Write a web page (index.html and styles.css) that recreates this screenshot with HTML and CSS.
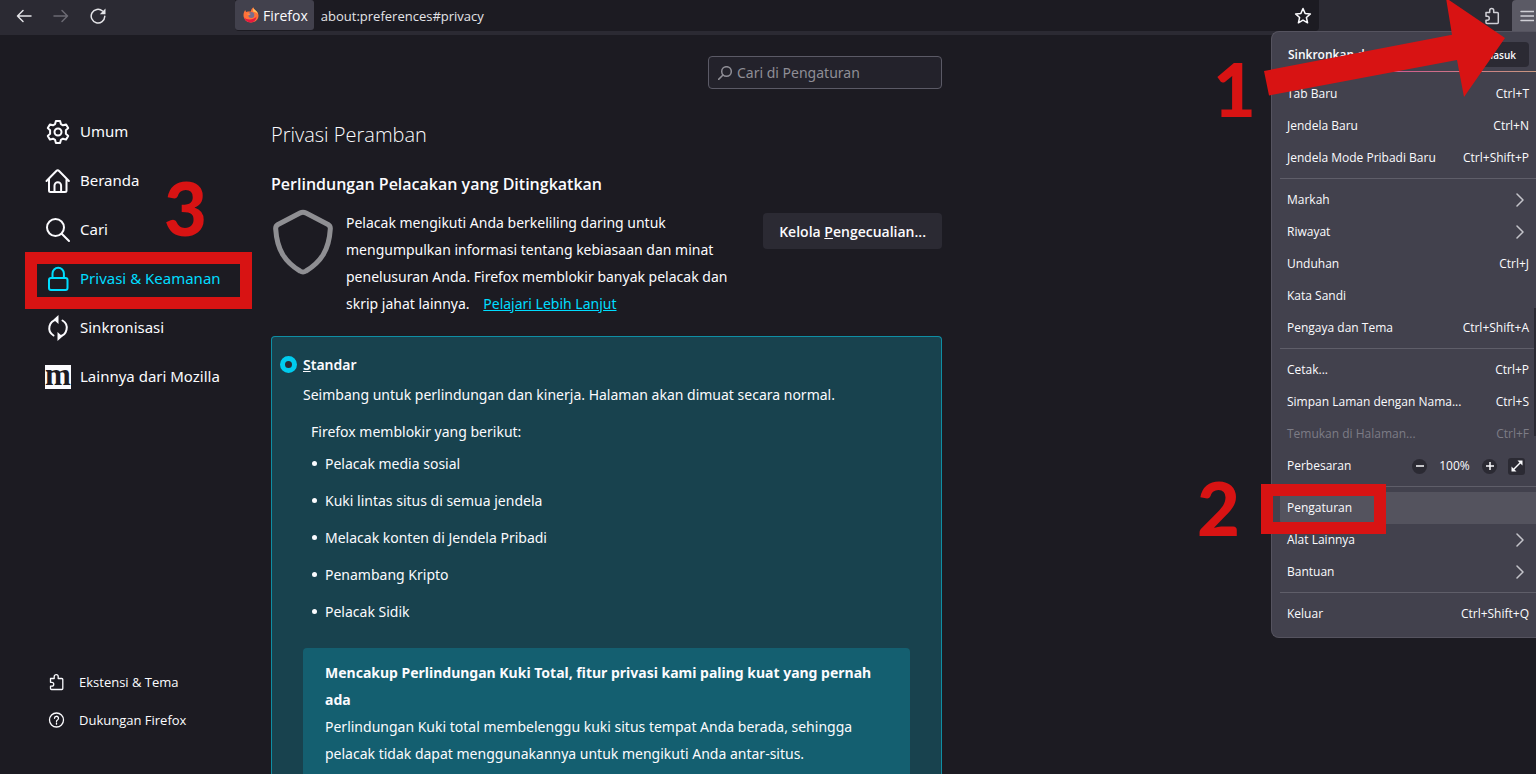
FILE: index.html
```html
<!DOCTYPE html>
<html lang="id">
<head>
<meta charset="utf-8">
<title>Pengaturan</title>
<link rel="stylesheet" href="styles.css">
</head>
<body>
<header class="toolbar">
  <div class="nav-buttons">
    <button class="icon-button" aria-label="Kembali"><svg width="16" height="16" viewBox="0 0 16 16"><path d="M15 8H1.500M7 2.500 1.500 8 7 13.500"/></svg></button>
    <button class="icon-button dim" aria-label="Maju" disabled><svg width="16" height="16" viewBox="0 0 16 16"><path d="M1 8h13.500M9 2.500 14.500 8 9 13.500"/></svg></button>
    <button class="icon-button" aria-label="Muat ulang"><svg width="16" height="16" viewBox="0 0 16 16"><path d="M14.800 8.300A6.800 6.800 0 1 1 12.500 3"/><path class="solid" d="M15.500 0.500v5.800H9.800z"/></svg></button>
  </div>
  <div class="urlbar">
    <button class="identity">
      <svg class="plain" width="16" height="16" viewBox="0 0 16 16"><path d="M8 15.500C3.600 15.500.5 12.400.5 8.300c0-2 .6-3.800 1.700-5.300l.9 1.900 1.700-.3L8 4.500c0-1.700.8-3.200 2.300-4.300.2 1.500 1 2 2 3 2 1.500 3.200 3.300 3.200 5.500 0 3.900-3.300 6.800-7.500 6.800z" fill="#ff7139"/><path d="M10.300.2c.2 1.500 1 2 2 3 1.400 1 2.300 2.300 2.800 3.700-1.500-1.300-3-1.900-5-2.400z" fill="#ffc45c"/><path d="M1 10.200c1.500 1.600 3.500 2.300 6 2.200 2.700 0 4.800-1 6.500-3-.5 3.800-2.800 5.900-5.700 6.100C4.500 15.400 1.800 13.300 1 10.200z" fill="#e5193f"/><circle cx="8.300" cy="8" r="3" fill="#7a6c8c"/><path d="M3.500 6.800c1.500-.8 3-.8 4.200.3L5.800 8.500z" fill="#ff8c45"/></svg>
      <span>Firefox</span>
    </button>
    <input class="url" type="text" aria-label="Alamat" value="about:preferences#privacy">
    <button class="icon-button" aria-label="Markahi"><svg width="18" height="18" viewBox="0 0 18 18"><path d="m9 1.500 2.100 4.900 5.300.5-4 3.600 1.200 5.300L9 13.100l-4.600 2.700 1.200-5.300-4-3.600 5.300-.5z"/></svg></button>
  </div>
  <div class="tools">
    <button class="icon-button" aria-label="Ekstensi"><svg width="16" height="18" viewBox="0 0 16 18"><path d="M2 5.500h3.700V3.600a2 2 0 0 1 4 0v1.900h3.600a1 1 0 0 1 1 1v9a1 1 0 0 1-1 1H3a1 1 0 0 1-1-1v-2.300h1.300a1.900 1.900 0 0 0 0-3.900H2z"/></svg></button>
    <button class="icon-button menu-button" aria-label="Menu"><svg width="14" height="14" viewBox="0 0 14 14"><path d="M1 2.500h13M1 7h13M1 11.500h13"/></svg></button>
  </div>
</header>

<div class="page">
  <nav class="sidebar">
    <ul class="categories">
      <li><a href="#umum"><svg width="26" height="26" viewBox="0 0 26 26"><path d="M10.900 2h4.200l.8 3.100 2.100 1.200 3.100-.9 2.100 3.700-2.300 2.200v3.400l2.300 2.200-2.100 3.700-3.100-.9-2.100 1.200-.8 3.100h-4.200l-.8-3.100L8 19.700l-3.100.9-2.100-3.700 2.300-2.200v-3.400L2.800 9.100l2.100-3.700 3.100.9 2.100-1.200z"/><circle cx="13" cy="13" r="3.500"/></svg><span>Umum</span></a></li>
      <li><a href="#beranda"><svg width="26" height="26" viewBox="0 0 26 26"><path d="M1.500 13 11.300 3a2 2 0 0 1 2.800 0l9.800 10M4 11v11.500a1.500 1.500 0 0 0 1.500 1.500h14.500a1.500 1.500 0 0 0 1.500-1.500V11M9.500 24v-6.500a3.300 3.300 0 0 1 6.600 0V24"/></svg><span>Beranda</span></a></li>
      <li><a href="#cari"><svg width="26" height="26" viewBox="0 0 26 26"><circle cx="10.500" cy="10.500" r="8.500"/><path d="m16.700 16.700 7.300 7.300"/></svg><span>Cari</span></a></li>
      <li class="current"><a href="#privasi" aria-current="page"><svg width="26" height="26" viewBox="0 0 26 26"><rect x="4" y="12" width="18.500" height="12" rx="2"/><path d="M7.500 12V7.500a5.700 5.700 0 0 1 11.400 0V12"/></svg><span>Privasi &amp; Keamanan</span></a><span class="frame"></span></li>
      <li><a href="#sinkronisasi"><svg width="26" height="26" viewBox="0 0 26 26"><path d="M8.500 20.500A8.500 8.500 0 0 1 12 4.700M17.500 5.500A8.500 8.500 0 0 1 14 21.300"/><path class="solid" d="M13.500 0v9l-5-4.500zM12.500 17v9l5-4.500z"/></svg><span>Sinkronisasi</span></a></li>
      <li><a href="#lainnya"><span class="mozilla">m</span><span>Lainnya dari Mozilla</span></a></li>
    </ul>
    <span class="step step-three">3</span>
    <ul class="support">
      <li><a href="#ekstensi"><svg width="16" height="18" viewBox="0 0 16 18"><path d="M2 5.500h3.700V3.600a2 2 0 0 1 4 0v1.900h3.600a1 1 0 0 1 1 1v9a1 1 0 0 1-1 1H3a1 1 0 0 1-1-1v-2.300h1.300a1.900 1.900 0 0 0 0-3.900H2z"/></svg><span>Ekstensi &amp; Tema</span></a></li>
      <li><a href="#dukungan"><svg width="16" height="16" viewBox="0 0 16 16"><circle cx="8" cy="8" r="7"/><path d="M6 6.300a2 2 0 1 1 3 1.700c-.7.400-1 .7-1 1.400M8 11v1.200"/></svg><span>Dukungan Firefox</span></a></li>
    </ul>
  </nav>

  <main class="content">
    <label class="search">
      <svg width="14" height="14" viewBox="0 0 14 14"><circle cx="8.500" cy="5.500" r="4.800"/><path d="M5 9 .6 13.400"/></svg>
      <input type="search" placeholder="Cari di Pengaturan" aria-label="Cari di Pengaturan">
    </label>
    <h1>Privasi Peramban</h1>
    <h2>Perlindungan Pelacakan yang Ditingkatkan</h2>
    <div class="intro">
      <svg class="shield" width="60" height="66" viewBox="0 0 60 66"><path d="M27 4 5 15.500c-1.700 1-2.500 2.500-2.300 4.500C4 41 12 53 27 62c2 1.300 4 1.300 6 0 15-9 23-21 24.300-42 .2-2-.6-3.500-2.300-4.500L33 4c-2-1.100-4-1.100-6 0z"/></svg>
      <p>Pelacak mengikuti Anda berkeliling daring untuk mengumpulkan informasi tentang kebiasaan dan minat penelusuran Anda. Firefox memblokir banyak pelacak dan skrip jahat lainnya. <a href="#pelajari">Pelajari Lebih Lanjut</a></p>
      <button class="exceptions">Kelola <u>P</u>engecualian...</button>
    </div>
    <section class="option">
      <label class="option-title"><input type="radio" name="perlindungan" checked><span><u>S</u>tandar</span></label>
      <div class="option-body">
        <p>Seimbang untuk perlindungan dan kinerja. Halaman akan dimuat secara normal.</p>
        <p class="blocks">Firefox memblokir yang berikut:</p>
        <ul class="trackers">
          <li>Pelacak media sosial</li>
          <li>Kuki lintas situs di semua jendela</li>
          <li>Melacak konten di Jendela Pribadi</li>
          <li>Penambang Kripto</li>
          <li>Pelacak Sidik</li>
        </ul>
        <div class="notice">
          <strong>Mencakup Perlindungan Kuki Total, fitur privasi kami paling kuat yang pernah ada</strong>
          <p>Perlindungan Kuki total membelenggu kuki situs tempat Anda berada, sehingga pelacak tidak dapat menggunakannya untuk mengikuti Anda antar-situs.</p>
        </div>
      </div>
    </section>
  </main>
</div>

<aside class="app-menu">
  <div class="account"><span>Sinkronkan dan</span><button>Masuk</button></div>
  <ul>
    <li><button>Tab Baru<kbd>Ctrl+T</kbd></button></li>
    <li><button>Jendela Baru<kbd>Ctrl+N</kbd></button></li>
    <li><button>Jendela Mode Pribadi Baru<kbd>Ctrl+Shift+P</kbd></button></li>
  </ul>
  <ul>
    <li><button>Markah<svg width="10" height="14" viewBox="0 0 10 14"><path d="m2 1 6 6-6 6"/></svg></button></li>
    <li><button>Riwayat<svg width="10" height="14" viewBox="0 0 10 14"><path d="m2 1 6 6-6 6"/></svg></button></li>
    <li><button>Unduhan<kbd>Ctrl+J</kbd></button></li>
    <li><button>Kata Sandi</button></li>
    <li><button>Pengaya dan Tema<kbd>Ctrl+Shift+A</kbd></button></li>
  </ul>
  <ul>
    <li><button>Cetak...<kbd>Ctrl+P</kbd></button></li>
    <li><button>Simpan Laman dengan Nama...<kbd>Ctrl+S</kbd></button></li>
    <li><button disabled>Temukan di Halaman...<kbd>Ctrl+F</kbd></button></li>
    <li class="zoom"><span>Perbesaran</span>
      <button aria-label="Perkecil"><svg width="8" height="8" viewBox="0 0 8 8"><path d="M0 4h8"/></svg></button>
      <output>100%</output>
      <button aria-label="Perbesar"><svg width="8" height="8" viewBox="0 0 8 8"><path d="M0 4h8M4 0v8"/></svg></button>
      <button class="full" aria-label="Layar penuh"><svg width="12" height="12" viewBox="0 0 12 12"><path d="m2 10 8-8"/><path class="solid" d="M6.500.5h5v5zM.5 6.500v5h5z"/></svg></button>
    </li>
  </ul>
  <ul>
    <li class="selected"><button>Pengaturan</button><span class="frame"></span><span class="step step-two">2</span></li>
    <li><button>Alat Lainnya<svg width="10" height="14" viewBox="0 0 10 14"><path d="m2 1 6 6-6 6"/></svg></button></li>
    <li><button>Bantuan<svg width="10" height="14" viewBox="0 0 10 14"><path d="m2 1 6 6-6 6"/></svg></button></li>
  </ul>
  <ul>
    <li><button>Keluar<kbd>Ctrl+Shift+Q</kbd></button></li>
  </ul>
  <span class="scroll-thumb"></span>
</aside>
<span class="step step-one">1</span>
<svg class="arrow" width="276" height="100" viewBox="0 0 276 100"><path d="M4 71 192 34.700 186-2 245 38 204 97 197 60 9 95.500z"/></svg>
</body>
</html>
```
FILE: styles.css
```css
* { box-sizing: border-box; }
body {
  margin: 0;
  height: 100vh;
  overflow: hidden;
  position: relative;
  display: flex;
  flex-direction: column;
  background: #1c1b22;
  color: #fbfbfe;
  font: 14px/27px "Noto Sans", "Open Sans", sans-serif;
}
ul { list-style: none; margin: 0; padding: 0; }
p, h1, h2 { margin: 0; }
button, input, kbd { font: inherit; color: inherit; }
button { border: 0; background: none; padding: 0; }
a { color: inherit; text-decoration: none; }
svg { display: block; flex: none; fill: none; stroke: currentColor; stroke-width: 1.5; stroke-linejoin: round; stroke-linecap: round; }
svg .solid { fill: currentColor; stroke: none; }
svg.plain { stroke: none; }

/* Toolbar */
.toolbar { display: flex; height: 35px; flex: none; padding-bottom: 4px; background: #2b2a33; font-family: "Open Sans", sans-serif; }
.icon-button { display: grid; place-items: center; }
.nav-buttons { display: flex; align-items: center; gap: 21px; width: 235px; padding-left: 16px; color: #e4e4e8; }
.dim { color: #6b6a73; }
.urlbar { display: flex; flex: 1; background: #1c1b22; border-radius: 0 0 4px 4px; padding-right: 7px; }
.identity { display: flex; align-items: center; gap: 4px; height: 30px; padding: 0 6px 0 8px; background: #42414d; border-radius: 3px; }
.url { flex: 1; height: 31px; padding: 0 0 0 7px; border: 0; outline: 0; background: none; color: #e4e4e8; font-size: 13px; }
.tools { display: flex; justify-content: flex-end; gap: 12px; width: 217px; color: #d0d0d6; }
.menu-button { width: 24px; padding-left: 8px; background: #5b5a65; border-radius: 4px 0 0 0; justify-items: start; }

/* Page */
.page { display: flex; flex: 1; min-height: 0; }
.sidebar { position: relative; display: flex; flex-direction: column; justify-content: space-between; width: 271px; padding: 72px 0 35px 45px; flex: none; }
.sidebar li { position: relative; }
.categories { font-size: 15px; }
.categories a { display: flex; align-items: center; gap: 9px; height: 49px; }
.categories svg { stroke-width: 2; }
.current { color: #00ddff; }
.mozilla { width: 26px; height: 24px; background: #fbfbfe; color: #1c1b22; font: bold 31px/20px "Liberation Serif", serif; text-align: center; }
.support { font: 13px/27px "Open Sans", sans-serif; }
.support a { display: flex; align-items: center; gap: 14px; height: 38px; padding-left: 3px; }
.support svg { width: 17px; stroke-width: 1.3; }

.content { width: 671px; display: flex; flex-direction: column; flex: none; padding-top: 21px; }
.search { align-self: flex-end; display: flex; align-items: center; gap: 5px; width: 234px; height: 33px; padding: 0 9px; border: 1px solid #5b5a66; border-radius: 4px; background: #23222b; color: #8f8e96; }
.search input { flex: 1; min-width: 0; padding: 0; border: 0; outline: 0; background: none; }
.search input::placeholder { color: #8f8e96; opacity: 1; }
h1 { margin-top: 31px; font-family: "Open Sans", sans-serif; font-size: 20px; line-height: 30px; font-weight: 300; }
h2 { margin-top: 21px; font-family: "Open Sans", sans-serif; font-size: 16px; line-height: 27px; font-weight: 600; }
.intro { display: flex; align-items: flex-start; margin-top: 11px; }
.intro p { flex: 1; margin-left: 13px; }
.intro a { margin-left: 10px; color: #00ddff; text-decoration: underline; }
.shield { color: #8f8f93; stroke-width: 5; margin-left: 2px; }
.exceptions { height: 36px; margin-top: 4px; margin-left: 20px; padding: 0 16px; border-radius: 4px; background: #2b2a33; font-family: "Open Sans", sans-serif; font-weight: 600; }
.option { flex: 1; min-height: 0; margin-top: 19px; padding: 14px 31px 0 8px; border: 1px solid #0f8ea4; border-bottom: 0; border-radius: 4px 4px 0 0; background: #18424e; }
.option-title { display: flex; align-items: center; gap: 6px; font-weight: 600; }
.option-title input { appearance: none; width: 17px; height: 17px; margin: 0; border: 5px solid #00ccee; border-radius: 50%; background: #2b2a33; }
.option-body { margin: 3px 0 0 23px; }
.blocks { margin: 10px 0 0 8px; }
.trackers li { display: flex; align-items: center; gap: 8px; height: 37px; padding-left: 9px; }
.trackers li::before { content: ""; width: 5px; height: 5px; border-radius: 50%; background: #fbfbfe; }
.notice { margin-top: 18px; padding: 11px 16px 30px 22px; border-radius: 4px; background: #145f70; }
.notice strong { display: block; font-weight: 700; }

/* Application menu */
.app-menu { position: absolute; top: 31px; right: 0; width: 265px; padding: 5px 0 7px 8px; border: 1px solid #55535f; border-width: 1px 0 1px 1px; border-radius: 8px 0 0 8px; background: #42414d; font: 12px/16px "Open Sans", sans-serif; }
.account { display: flex; align-items: center; justify-content: space-between; height: 35px; padding: 0 7px 0 8px; background: linear-gradient(90deg, #9059ff, #d0608c 50%, #c89880) bottom / 100% 1px no-repeat; margin-bottom: 6px; font-weight: 600; }
.account button { height: 25px; padding: 0 13px; border-radius: 4px; background: #2b2a33; font-size: 10px; font-weight: 600; }
.app-menu ul + ul { margin-top: 4px; padding-top: 5px; border-top: 1px solid #5f5e69; }
.app-menu li { position: relative; height: 32px; }
.app-menu li > button:only-child, .selected > button { display: flex; align-items: center; justify-content: space-between; width: 100%; height: 32px; padding: 0 7px 0 7px; text-align: left; border-radius: 4px 0 0 4px; }
.app-menu button:disabled { color: #7d7c86; }
.app-menu svg { color: #c4c4ca; margin-right: 4px; }
.selected > button { background: #54535e; }
.app-menu .zoom { display: flex; align-items: center; padding: 0 11px 0 7px; }
.zoom span { flex: 1; }
.zoom output { width: 55px; text-align: center; }
.zoom button { display: grid; place-items: center; width: 15px; height: 15px; border-radius: 50%; background: #2b2a33; }
.app-menu .zoom svg { margin: 0; color: #fbfbfe; }
.zoom .full { width: 17px; height: 17px; margin-left: 11px; border-radius: 3px; }
.scroll-thumb { position: absolute; top: 276px; right: 0; width: 2px; height: 128px; background: #2b2a33; }

/* Step markers laid over the interface */
.frame { position: absolute; border: 12px solid #d81313; pointer-events: none; }
.current .frame { top: -2px; left: -20px; width: 227px; height: 57px; }
.selected .frame { top: -8px; left: -19px; width: 125px; height: 50px; }
.step { position: absolute; color: #d81313; font: 900 74px/76px Lato, sans-serif; }
.step-one { top: 51px; right: 280px; }
.step-two { top: -22px; left: -83px; }
.step-three { top: 135px; left: 164px; }
.arrow { position: absolute; top: 0; right: 0; fill: #d81313; stroke: none; }
```
